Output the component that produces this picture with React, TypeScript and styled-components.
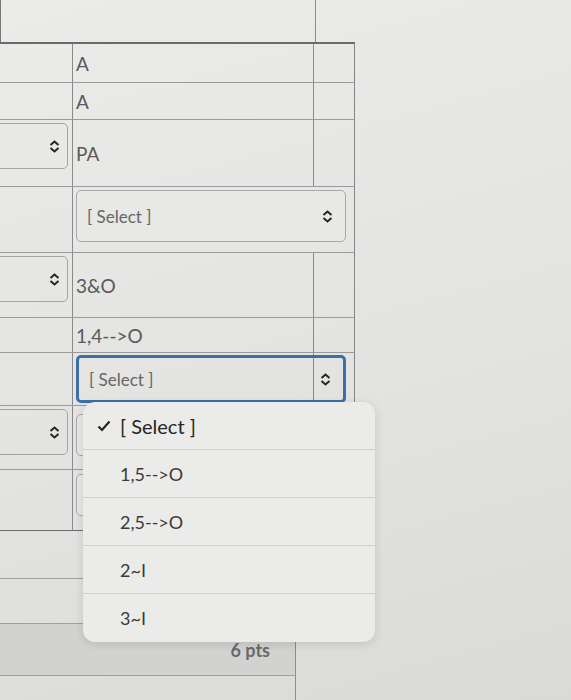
import { FC } from "react";
import styled, { createGlobalStyle } from "styled-components";

const GlobalStyle = createGlobalStyle`
    body {
        margin: 0;
        background: linear-gradient(165deg, #ebebe9 0%, #e3e3e1 55%, #dadad8 100%);
        font-family: Lato, "Liberation Sans", sans-serif;
    }
`

const Page = styled.div`
    position: relative;
    width: 571px;
    height: 700px;
    overflow: hidden;
`

const TopStrip = styled.div`
    box-sizing: border-box;
    width: 316px;
    height: 42px;
    border-left: 1px solid #777;
    border-right: 1px solid #8c8c8c;
`

const Table = styled.div`
    width: 354px;
    border-top: 2px solid #6a6a6a;
    border-right: 1px solid #858585;
    border-bottom: 1px solid #6e6e6e;
`

const Row = styled.div<{ $h: number; $last?: boolean }>`
    box-sizing: border-box;
    display: grid;
    grid-template-columns: 73px 240px 1fr;
    height: ${p => p.$h}px;
    border-bottom: ${p => (p.$last ? "none" : "1px solid #9b9b9b")};
`

const KeyCell = styled.div`
    grid-column: 1;
    grid-row: 1;
    border-right: 1px solid #8a8a8a;
    padding-top: 3px;
`

const ValueCell = styled.div`
    grid-column: 2;
    grid-row: 1;
    display: flex;
    align-items: center;
    padding-left: 3px;
    font-size: 19px;
    color: #5a5a5a;
`

const EndCell = styled.div`
    grid-column: 3;
    grid-row: 1;
    border-left: 1px solid #8a8a8a;
`

const SpanCell = styled.div<{ $top: number }>`
    grid-column: 2 / 4;
    grid-row: 1;
    padding: ${p => p.$top}px 8px 0 3px;
`

const KeySelect = styled.div`
    box-sizing: border-box;
    display: flex;
    align-items: center;
    justify-content: flex-end;
    width: 80px;
    height: 46px;
    margin-left: -12px;
    padding-right: 7px;
    border: 1px solid #a4a4a4;
    border-radius: 5px;
    color: #2a2a2a;
`

const ValueSelect = styled.div<{ $focused?: boolean; $h: number }>`
    box-sizing: border-box;
    display: flex;
    align-items: center;
    justify-content: space-between;
    height: ${p => p.$h}px;
    padding: 0 12px 0 10px;
    border: ${p => (p.$focused ? "3px solid #3e6ea6" : "1px solid #a8a8a8")};
    border-radius: 5px;
    background: ${p => (p.$focused ? "transparent" : "#e8e8e6")};
    font-size: 17px;
    color: #666;
`

const FootRow = styled.div<{ $h: number; $shade?: boolean }>`
    box-sizing: border-box;
    display: flex;
    align-items: center;
    justify-content: flex-end;
    width: 296px;
    height: ${p => p.$h}px;
    padding-right: 25px;
    border-right: 1px solid #8c8c8c;
    border-bottom: 1px solid #a0a0a0;
    background: ${p => (p.$shade ? "#d2d2d0" : "transparent")};
    font-size: 18px;
    font-weight: bold;
    color: #6a6a6a;
`

const Menu = styled.ul`
    position: absolute;
    left: 83px;
    top: 402px;
    width: 292px;
    margin: 0;
    padding: 0;
    list-style: none;
    background: #ebebea;
    border-radius: 12px;
    box-shadow: 0 2px 10px rgba(0, 0, 0, 0.12);
    overflow: hidden;
`

const MenuItem = styled.li<{ $selected?: boolean }>`
    box-sizing: border-box;
    display: flex;
    align-items: center;
    gap: 9px;
    height: 48px;
    padding-left: ${p => (p.$selected ? "14px" : "37px")};
    border-bottom: 1px solid #cfcfcd;
    font-size: ${p => (p.$selected ? "20px" : "18px")};
    color: ${p => (p.$selected ? "#262626" : "#3a3a3a")};
    &:last-child {
        border-bottom: none;
    }
`

const Chevron: FC = () => (
    <svg width="11" height="13" viewBox="0 0 11 13" fill="none">
        <path d="M1.5 5 L5.5 1.5 L9.5 5 M1.5 8 L5.5 11.5 L9.5 8" stroke="#262626" strokeWidth="2" />
    </svg>
)

const CheckMark: FC = () => (
    <svg width="14" height="12" viewBox="0 0 14 12" fill="none">
        <path d="M1.5 6.5 L5 10 L12.5 1.5" stroke="#262626" strokeWidth="2.2" />
    </svg>
)

const Key: FC<{ select?: boolean }> = ({ select }) => (
    <KeyCell>
        {select && (
            <KeySelect>
                <Chevron />
            </KeySelect>
        )}
    </KeyCell>
)

const options = ["1,5-->O", "2,5-->O", "2~I", "3~I"]

const App: FC = () => {
    return (
        <Page>
            <GlobalStyle />
            <TopStrip />
            <Table>
                <Row $h={39}>
                    <Key />
                    <ValueCell>A</ValueCell>
                    <EndCell />
                </Row>
                <Row $h={37}>
                    <Key />
                    <ValueCell>A</ValueCell>
                    <EndCell />
                </Row>
                <Row $h={67}>
                    <Key select />
                    <ValueCell>PA</ValueCell>
                    <EndCell />
                </Row>
                <Row $h={66}>
                    <Key />
                    <SpanCell $top={3}>
                        <ValueSelect $h={52}>
                            [ Select ]
                            <Chevron />
                        </ValueSelect>
                    </SpanCell>
                </Row>
                <Row $h={65}>
                    <Key select />
                    <ValueCell>3&amp;O</ValueCell>
                    <EndCell />
                </Row>
                <Row $h={35}>
                    <Key />
                    <ValueCell>1,4--&gt;O</ValueCell>
                    <EndCell />
                </Row>
                <Row $h={53}>
                    <Key />
                    <EndCell />
                    <SpanCell $top={2}>
                        <ValueSelect $h={48} $focused>
                            [ Select ]
                            <Chevron />
                        </ValueSelect>
                    </SpanCell>
                </Row>
                {/* these two selects sit under the open menu */}
                <Row $h={64}>
                    <Key select />
                    <SpanCell $top={8}>
                        <ValueSelect $h={42} />
                    </SpanCell>
                </Row>
                <Row $h={60} $last>
                    <Key />
                    <SpanCell $top={4}>
                        <ValueSelect $h={42} />
                    </SpanCell>
                </Row>
            </Table>
            <FootRow $h={48} />
            <FootRow $h={45} />
            <FootRow $h={52} $shade>6 pts</FootRow>
            <FootRow $h={40} />
            <Menu>
                <MenuItem $selected>
                    <CheckMark />
                    [ Select ]
                </MenuItem>
                {options.map(o => (
                    <MenuItem key={o}>{o}</MenuItem>
                ))}
            </Menu>
        </Page>
    );
}

export default App;
